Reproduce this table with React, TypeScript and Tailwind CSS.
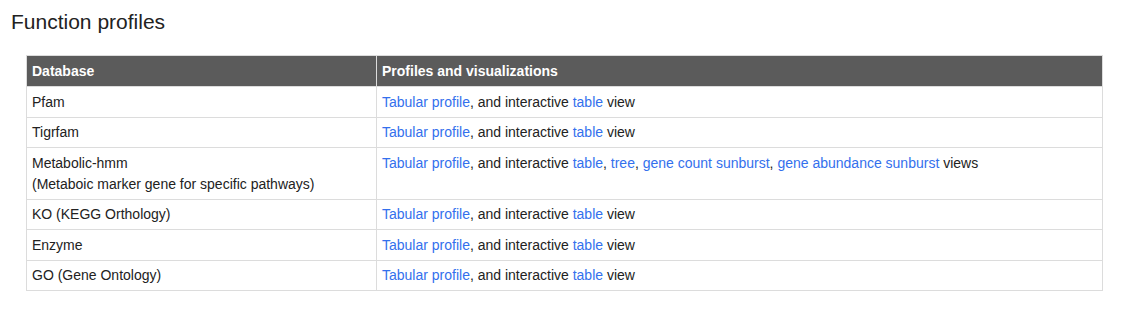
const link = "text-[#3370ed]";

function L({ children }: { children: React.ReactNode }) {
  return (
    <a href="#" className={link}>
      {children}
    </a>
  );
}

function Standard() {
  return (
    <>
      <L>Tabular profile</L>, and interactive <L>table</L> view
    </>
  );
}

const rows: { name: React.ReactNode; views: React.ReactNode }[] = [
  { name: "Pfam", views: <Standard /> },
  { name: "Tigrfam", views: <Standard /> },
  {
    name: (
      <>
        Metabolic-hmm
        <br />
        (Metaboic marker gene for specific pathways)
      </>
    ),
    views: (
      <>
        <L>Tabular profile</L>, and interactive <L>table</L>, <L>tree</L>,{" "}
        <L>gene count sunburst</L>, <L>gene abundance sunburst</L> views
      </>
    ),
  },
  { name: "KO (KEGG Orthology)", views: <Standard /> },
  { name: "Enzyme", views: <Standard /> },
  { name: "GO (Gene Ontology)", views: <Standard /> },
];

export default function App() {
  return (
    <div className="w-[1128px] h-[311px] bg-white font-['Liberation_Sans',Arial,sans-serif] text-[#222]">
      <h2 className="pl-[11px] pt-[9px] text-[21px] leading-[25px] font-normal text-[#222]">
        Function profiles
      </h2>
      <div className="pl-[26px] pt-[21px]">
        <table className="w-[1077px] border-collapse border border-[#dcdcdc] text-[14px] leading-[21px]">
          <thead>
            <tr className="bg-[#5b5b5b] text-white">
              <th className="w-[350px] border border-[#dcdcdc] px-[5px] pt-[5px] pb-[4px] text-left font-bold">
                Database
              </th>
              <th className="border border-[#dcdcdc] px-[5px] pt-[5px] pb-[4px] text-left font-bold">
                Profiles and visualizations
              </th>
            </tr>
          </thead>
          <tbody>
            {rows.map((r, i) => (
              <tr key={i}>
                <td className="border border-[#dcdcdc] px-[5px] pt-[4.5px] pb-[4px] align-top">
                  {r.name}
                </td>
                <td className="border border-[#dcdcdc] px-[5px] pt-[4.5px] pb-[4px] align-top">
                  {r.views}
                </td>
              </tr>
            ))}
          </tbody>
        </table>
      </div>
    </div>
  );
}
